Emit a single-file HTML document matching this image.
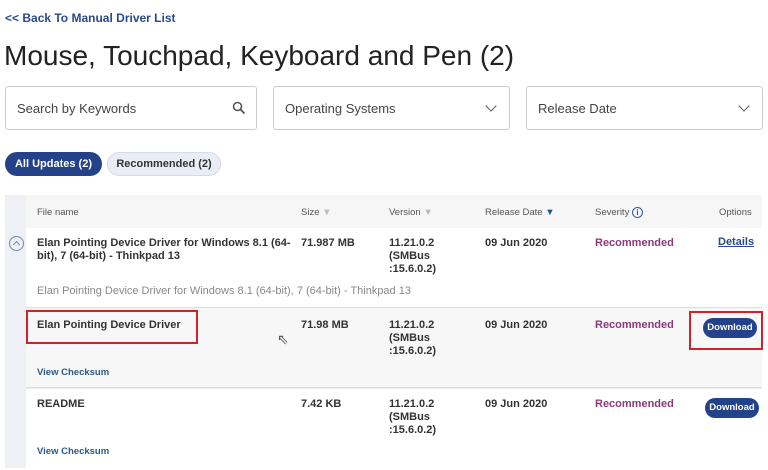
<!DOCTYPE html>
<html><head><meta charset="utf-8"><style>
*{margin:0;padding:0;box-sizing:border-box}
body{width:768px;height:470px;overflow:hidden;background:#fff;font-family:"Liberation Sans",sans-serif;color:#333;position:relative}
.a{position:absolute;white-space:nowrap}
.box{position:absolute;border:1px solid #ccc;border-radius:3px;height:44px;top:86px;font-size:13px;color:#444}
.box span{position:absolute;left:11px;top:14px}
.b{font-size:11px;font-weight:bold;color:#333;line-height:13px}
.h{font-size:9.5px;color:#555;top:207px}
.rec{font-size:11px;font-weight:bold;color:#8a3a7a}
.vc{font-size:9.5px;font-weight:bold;color:#2a5a8a}
.dl{position:absolute;background:#23428a;color:#fff;font-size:9.5px;font-weight:bold;border-radius:10px;width:54px;height:20px;text-align:center;line-height:20px}
.chev{position:absolute;right:14px;top:15px;width:8px;height:8px;border-right:1.5px solid #555;border-bottom:1.5px solid #555;transform:rotate(45deg)}
</style></head><body>
<div class="a" style="left:5px;top:11px;font-size:12px;font-weight:bold;color:#2a4a8a">&lt;&lt; Back To Manual Driver List</div>
<div class="a" style="left:4px;top:40px;font-size:28px;color:#222">Mouse, Touchpad, Keyboard and Pen (2)</div>
<div class="box" style="left:5px;width:252px"><span>Search by Keywords</span>
<svg style="position:absolute;right:10px;top:14px" width="14" height="14" viewBox="0 0 14 14"><circle cx="5.5" cy="5.5" r="4" fill="none" stroke="#555" stroke-width="1.6"/><path d="M8.5 8.5L12.5 12.5" stroke="#555" stroke-width="1.8"/></svg></div>
<div class="box" style="left:273px;width:237px"><span>Operating Systems</span><div class="chev"></div></div>
<div class="box" style="left:526px;width:237px"><span>Release Date</span><div class="chev"></div></div>
<div class="a" style="left:5px;top:152px;width:97px;height:24px;background:#23428a;border-radius:12px;color:#fff;font-size:11px;font-weight:bold;text-align:center;line-height:24px">All Updates (2)</div>
<div class="a" style="left:107px;top:152px;width:114px;height:24px;background:#e9edf5;border:1px solid #d5dbe6;border-radius:12px;color:#333;font-size:11px;font-weight:bold;text-align:center;line-height:22px">Recommended (2)</div>
<div class="a" style="left:5px;top:195px;width:757px;height:273px;background:#eef0f5"></div>
<div class="a" style="left:26px;top:195px;width:736px;height:33px;background:#f6f6f6"></div>
<div class="a" style="left:26px;top:228px;width:736px;height:80px;background:#fff;border-bottom:1px solid #ddd"></div>
<div class="a" style="left:26px;top:308px;width:736px;height:80px;background:#f7f7f7;border-bottom:1px solid #ddd"></div>
<div class="a" style="left:26px;top:389px;width:736px;height:79px;background:#fff"></div>
<div class="a h" style="left:37px">File name</div>
<div class="a h" style="left:301px">Size <span style="color:#bbb">▼</span></div>
<div class="a h" style="left:389px">Version <span style="color:#bbb">▼</span></div>
<div class="a h" style="left:485px">Release Date <span style="color:#1d5a8a">▼</span></div>
<div class="a h" style="left:595px">Severity <span style="display:inline-block;width:11px;height:11px;border:1.3px solid #2a5aa0;border-radius:50%;font-size:8px;line-height:9px;text-align:center;color:#2a5aa0;font-weight:bold">i</span></div>
<div class="a h" style="left:719px">Options</div>
<div class="a" style="left:9px;top:236px;width:15px;height:15px;border:1px solid #6a8ab0;border-radius:50%"></div>
<div class="a" style="left:14px;top:242px;width:5px;height:5px;border-left:1px solid #6a8ab0;border-top:1px solid #6a8ab0;transform:rotate(45deg)"></div>
<div class="a b" style="left:37px;top:237px">Elan Pointing Device Driver for Windows 8.1 (64-<br>bit), 7 (64-bit) - Thinkpad 13</div>
<div class="a b" style="left:301px;top:237px">71.987 MB</div>
<div class="a b" style="left:389px;top:237px">11.21.0.2<br>(SMBus<br>:15.6.0.2)</div>
<div class="a b" style="left:485px;top:237px">09 Jun 2020</div>
<div class="a rec" style="left:595px;top:237px">Recommended</div>
<div class="a" style="left:718px;top:236px;font-size:11px;font-weight:bold;color:#2a4a8a;text-decoration:underline">Details</div>
<div class="a" style="left:37px;top:285px;font-size:11px;color:#888">Elan Pointing Device Driver for Windows 8.1 (64-bit), 7 (64-bit) - Thinkpad 13</div>
<div class="a b" style="left:37px;top:319px">Elan Pointing Device Driver</div>
<div class="a" style="left:26px;top:310px;width:172px;height:34px;border:2px solid #d0222a"></div>
<div class="a" style="left:277px;top:331px;font-size:14px;color:#555">⇖</div>
<div class="a b" style="left:301px;top:319px">71.98 MB</div>
<div class="a b" style="left:389px;top:319px">11.21.0.2<br>(SMBus<br>:15.6.0.2)</div>
<div class="a b" style="left:485px;top:319px">09 Jun 2020</div>
<div class="a rec" style="left:595px;top:319px">Recommended</div>
<div class="dl" style="left:703px;top:318px">Download</div>
<div class="a" style="left:689px;top:311px;width:74px;height:39px;border:2px solid #d0222a"></div>
<div class="a vc" style="left:37px;top:367px">View Checksum</div>
<div class="a b" style="left:37px;top:398px">README</div>
<div class="a b" style="left:301px;top:398px">7.42 KB</div>
<div class="a b" style="left:389px;top:398px">11.21.0.2<br>(SMBus<br>:15.6.0.2)</div>
<div class="a b" style="left:485px;top:398px">09 Jun 2020</div>
<div class="a rec" style="left:595px;top:398px">Recommended</div>
<div class="dl" style="left:705px;top:398px">Download</div>
<div class="a vc" style="left:37px;top:446px">View Checksum</div>
</body></html>
